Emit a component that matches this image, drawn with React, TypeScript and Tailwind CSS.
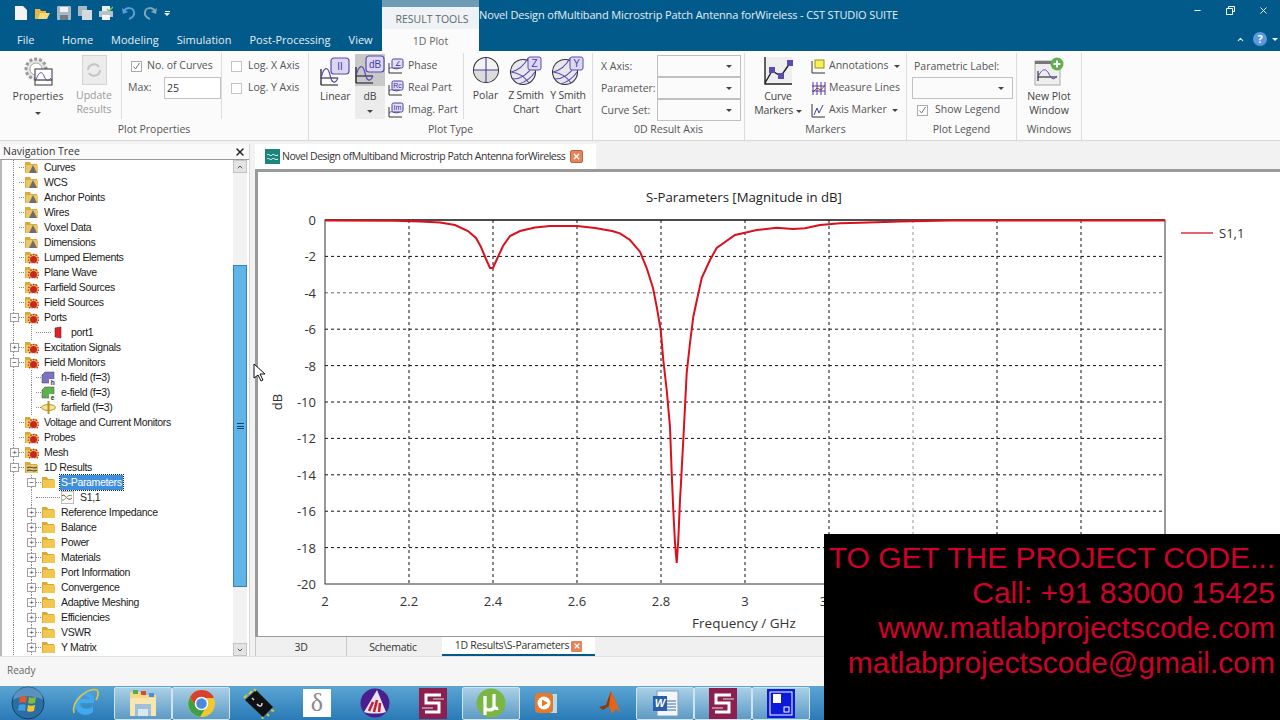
import React from 'react';
import { ChevronUp, ChevronDown, Minus, X } from 'lucide-react';

const uiFont = { fontFamily: '"Open Sans", "Noto Sans", sans-serif' };

function Caret({ className = '' }: { className?: string }) {
	return <span className={`inline-block w-0 h-0 border-x-[3px] border-x-transparent border-t-[3px] border-t-[#444] ${className}`} />;
}

function WaveIcon({ badge, dim = false }: { badge?: string; dim?: boolean }) {
	return (
		<svg width="30" height="30" viewBox="0 0 30 30">
			<path d="M1 12v16M1 21h17M1 28h17" stroke={dim ? '#999' : '#111'} strokeWidth="1.2" fill="none" />
			<path d="M1 21c3-12 7-12 9-3s5 9 8 3" stroke="#5b4bb0" strokeWidth="1.2" fill="none" />
			{badge && (
				<>
					<rect x="11" y="1" width="18" height="16" rx="3" fill="#dcd8f3" stroke="#5b4bb0" strokeWidth="1.2" />
					<text x="20" y="13" textAnchor="middle" fontSize="10" fill="#4a3ca6" fontFamily="Liberation Sans">{badge}</text>
				</>
			)}
		</svg>
	);
}

function SmithIcon({ letter }: { letter: string }) {
	return (
		<svg width="32" height="30" viewBox="0 0 32 30">
			<circle cx="13" cy="16" r="12.5" fill="#e8e8ec" stroke="#333" strokeWidth="1.1" />
			<path d="M1 16c8-2 14-8 17-14M3 23c8 0 15-5 20-13M9 28c6-2 12-6 16-12M1 16c8 1 14 5 18 11" stroke="#5b4bb0" strokeWidth="1.1" fill="none" />
			<rect x="18" y="1" width="13" height="13" rx="2" fill="#dcd8f3" stroke="#5b4bb0" />
			<text x="24.5" y="11" textAnchor="middle" fontSize="10" fill="#4a3ca6" fontFamily="Liberation Sans">{letter}</text>
		</svg>
	);
}

function SmallBadge({ letter }: { letter: string }) {
	return (
		<svg width="16" height="16" viewBox="0 0 16 16">
			<path d="M1 5v10h13" stroke="#333" fill="none" />
			<path d="M1 11c3-4 6 3 12-2" stroke="#5b4bb0" fill="none" />
			<rect x="4" y="1" width="11" height="9" rx="1.5" fill="#e2dff5" stroke="#4a3ca6" />
			<text x="9.5" y="8" textAnchor="middle" fontSize="7" fill="#3b2e96" fontFamily="Liberation Sans">{letter}</text>
		</svg>
	);
}

function Check({ checked = false, dim = false }: { checked?: boolean; dim?: boolean }) {
	return (
		<span className={`w-[11px] h-[11px] border flex items-center justify-center shrink-0 bg-white ${dim ? 'border-[#c4c4c4]' : 'border-[#ababab]'}`}>
			{checked && (
				<svg width="9" height="9" viewBox="0 0 9 9"><path d="M1.5 4.5l2 2.5 4-6" stroke="#777" fill="none" /></svg>
			)}
		</span>
	);
}

function Group({ label, width, children }: { label: string; width: string; children: React.ReactNode }) {
	return (
		<div className={`${width} h-[87px] mt-[2px] border-r border-[#dcdcdc] flex flex-col shrink-0`}>
			<div className="flex-1 flex min-h-0">{children}</div>
			<div className="h-[19px] text-center text-[10.5px] leading-[16px] text-[#555]">{label}</div>
		</div>
	);
}

function Combo({ className = '' }: { className?: string }) {
	return (
		<div className={`h-[22px] border border-[#c0c0c0] bg-[#fbfbfb] flex items-center justify-end pr-2 ${className}`}>
			<Caret />
		</div>
	);
}

function Ribbon() {
	return (
		<div className="h-[90px] bg-[#fbfbfb] border-b border-[#d8d8d8] flex text-[10.5px] text-[#555]">
			<Group label="Plot Properties" width="w-[309px]">
				<div className="w-[76px] pt-[3px] flex flex-col items-center">
					<svg width="30" height="30" viewBox="0 0 30 30">
						<circle cx="13" cy="13" r="10" fill="#e4e4e4" stroke="#999" strokeWidth="3" strokeDasharray="3 2" />
						<circle cx="13" cy="13" r="6" fill="#fff" stroke="#aaa" />
						<rect x="12" y="13" width="17" height="16" fill="#fff" stroke="#333" />
						<path d="M12 24h17" stroke="#111" />
						<path d="M13 24c3-9 6-9 8-4s4 6 7 2" stroke="#5b4bb0" fill="none" />
					</svg>
					<div className="mt-[3px] text-[#444] leading-[14px]">Properties</div>
					<Caret className="mt-[9px]" />
				</div>
				<div className="w-[45px] pr-[9px] flex flex-col items-center pt-[2px]">
					<div className="w-[25px] h-[30px] bg-[#ececec] border border-[#d4d4d4] flex items-center justify-center">
						<svg width="18" height="18" viewBox="0 0 18 18"><path d="M3 9a6 6 0 0 1 11-3M15 9a6 6 0 0 1-11 3" stroke="#c4c4c4" strokeWidth="2" fill="none" /></svg>
					</div>
					<div className="mt-[3px] text-[#9a9a9a] leading-[14px] text-center">Update<br />Results</div>
				</div>
				<div className="w-[100px] h-[66px] border-l border-[#dcdcdc] pl-[6px] pt-[5px] flex flex-col">
					<div className="flex items-center gap-[5px] h-[16px] pl-[3px]">
						<Check checked />
						<span>No. of Curves</span>
					</div>
					<div className="flex items-center mt-[3px] h-[22px]">
						<span className="w-[36px]">Max:</span>
						<div className="w-[57px] h-[22px] border border-[#c4c4c4] bg-white pl-[2px] leading-[20px] text-[#333]">25</div>
					</div>
				</div>
				<div className="flex-1 h-[66px] border-l border-[#dcdcdc] pl-[9px] pt-[5px] flex flex-col gap-[6px]">
					<div className="flex items-center gap-[6px] h-[16px]"><Check dim /><span>Log. X Axis</span></div>
					<div className="flex items-center gap-[6px] h-[16px]"><Check dim /><span>Log. Y Axis</span></div>
				</div>
			</Group>
			<Group label="Plot Type" width="w-[284px]">
				<div className="w-[46px] pl-[11px] pt-[4px] flex flex-col items-start">
					<WaveIcon badge="II" />
					<div className="mt-[2px] text-[#444] leading-[14px]">Linear</div>
				</div>
				<div className="w-[30px] h-[65px] mt-[1px] bg-[#ececec] flex flex-col items-center">
					<div className="w-full h-[32px] bg-[#c8c8c8] flex items-center justify-center"><WaveIcon badge="dB" /></div>
					<div className="mt-[3px] text-[#444] leading-[14px]">dB</div>
					<Caret className="mt-[7px]" />
				</div>
				<div className="pl-[3px] pt-[2px] flex flex-col text-[#555]">
					<div className="flex items-center gap-[4px] h-[22px]"><SmallBadge letter="∠" /><span>Phase</span></div>
					<div className="flex items-center gap-[4px] h-[22px]"><SmallBadge letter="Rc" /><span>Real Part</span></div>
					<div className="flex items-center gap-[4px] h-[22px]"><SmallBadge letter="Im" /><span>Imag. Part</span></div>
				</div>
				<div className="ml-auto border-l border-[#dcdcdc] w-[129px] h-[66px] flex">
					<div className="w-[43px] pt-[3px] flex flex-col items-center">
						<svg width="28" height="28" viewBox="0 0 28 28">
							<circle cx="14" cy="14" r="12.5" fill="#f3f3f3" stroke="#333" strokeWidth="1.1" />
							<path d="M2 14h24a12 12 0 0 1-24 0z" fill="#dcdcdc" />
							<path d="M14 1.5v25M1.5 14h25" stroke="#4a3ca6" strokeWidth="1.1" />
						</svg>
						<div className="mt-[4px] text-[#444] leading-[14px]">Polar</div>
					</div>
					<div className="w-[38px] pt-[3px] flex flex-col items-center text-center">
						<SmithIcon letter="Z" />
						<div className="mt-[2px] text-[#444] leading-[14px] whitespace-nowrap tracking-[-0.2px]">Z Smith<br />Chart</div>
					</div>
					<div className="w-[46px] pt-[3px] flex flex-col items-center text-center">
						<SmithIcon letter="Y" />
						<div className="mt-[2px] text-[#444] leading-[14px] whitespace-nowrap tracking-[-0.2px]">Y Smith<br />Chart</div>
					</div>
				</div>
			</Group>
			<Group label="0D Result Axis" width="w-[152px]">
				<div className="pl-[8px] pt-[2px] flex gap-[1px]">
					<div className="w-[55px] flex flex-col">
						<div className="h-[22px] leading-[22px]">X Axis:</div>
						<div className="h-[22px] leading-[22px]">Parameter:</div>
						<div className="h-[22px] leading-[22px]">Curve Set:</div>
					</div>
					<div className="w-[84px] flex flex-col">
						<Combo />
						<Combo />
						<Combo />
					</div>
				</div>
			</Group>
			<Group label="Markers" width="w-[162px]">
				<div className="w-[66px] pt-[3px] flex flex-col items-center">
					<svg width="29" height="29" viewBox="0 0 29 29">
						<rect x="1" y="1" width="27" height="27" fill="#eeeeee" />
						<path d="M1 1v27h27" stroke="#222" strokeWidth="1.4" fill="none" />
						<path d="M1 27l7-12 9 5 9-13" stroke="#222" strokeWidth="1.4" fill="none" />
						<rect x="5" y="11" width="6" height="6" fill="#5b4bb0" />
						<rect x="14" y="17" width="6" height="6" fill="#5b4bb0" />
						<rect x="23" y="4" width="6" height="6" fill="#5b4bb0" />
					</svg>
					<div className="mt-[4px] text-[#444] leading-[14px] text-center whitespace-nowrap tracking-[-0.2px]">Curve<br />Markers <Caret className="align-middle" /></div>
				</div>
				<div className="flex flex-col pt-[2px] text-[#555]">
					<div className="flex items-center gap-[3px] h-[22px] whitespace-nowrap">
						<svg width="15" height="15" viewBox="0 0 15 15"><path d="M1 2v12h13" stroke="#333" fill="none" /><rect x="4" y="1" width="9" height="8" fill="#f6ee5a" stroke="#9a8f20" /></svg>
						<span>Annotations</span><Caret className="ml-[2px]" />
					</div>
					<div className="flex items-center gap-[3px] h-[22px] whitespace-nowrap">
						<svg width="15" height="15" viewBox="0 0 15 15"><path d="M2 1v13M6 1v13M10 1v13M14 1v13M1 5h13M1 10h13" stroke="#4a3ca6" fill="none" /><path d="M2 11l4-4 4 2 4-5" stroke="#a33" fill="none" /></svg>
						<span>Measure Lines</span>
					</div>
					<div className="flex items-center gap-[3px] h-[22px] whitespace-nowrap">
						<svg width="15" height="15" viewBox="0 0 15 15"><path d="M1 1v13h13" stroke="#333" fill="none" /><path d="M3 12l3-7 2 5 4-8" stroke="#4a3ca6" fill="none" /></svg>
						<span>Axis Marker</span><Caret className="ml-[2px]" />
					</div>
				</div>
			</Group>
			<Group label="Plot Legend" width="w-[110px]">
				<div className="pl-[5px] pt-[2px] flex flex-col w-full">
					<div className="h-[22px] leading-[22px] pl-[2px]">Parametric Label:</div>
					<Combo className="w-[101px]" />
					<div className="flex items-center gap-[7px] h-[22px] pl-[5px]"><Check checked /><span>Show Legend</span></div>
				</div>
			</Group>
			<Group label="Windows" width="w-[65px]">
				<div className="w-full flex flex-col items-center pt-[4px] text-center text-[#444] leading-[14px]">
					<svg width="30" height="29" viewBox="0 0 30 29">
						<rect x="1" y="4" width="25" height="24" fill="#eeeeee" stroke="#aaa" />
						<rect x="1" y="4" width="25" height="3" fill="#777" />
						<path d="M4 14v10M4 20h19" stroke="#111" fill="none" />
						<path d="M4 20c4-9 8-9 11-3s5 6 8 2" stroke="#5b4bb0" fill="none" />
						<circle cx="23" cy="7" r="6.5" fill="#5fb04e" />
						<path d="M23 3.5v7M19.5 7h7" stroke="#fff" strokeWidth="2" />
					</svg>
					<div className="mt-[3px]">New Plot<br />Window</div>
				</div>
			</Group>
		</div>
	);
}

function TitleBar() {
	const tabs = ['Home', 'Modeling', 'Simulation', 'Post-Processing', 'View'];
	return (
		<div className="h-[51px] bg-[#015a8a] flex text-[#e6eef4]">
			<div className="w-[382px] shrink-0 flex flex-col">
				<div className="h-[26px] flex items-center pl-[14px] gap-[7px]">
					<svg width="14" height="16" viewBox="0 0 14 16"><path d="M1 1h8l4 4v10H1z" fill="#f4f4f4" /></svg>
					<svg width="15" height="14" viewBox="0 0 15 14"><path d="M0 3h5l1 2h5v8H0z" fill="#e6b64a" /><path d="M3 13l2-6h10l-3 6z" fill="#f6d97c" /></svg>
					<svg width="14" height="14" viewBox="0 0 14 14"><rect width="14" height="14" rx="1" fill="#a9b7c2" /><rect x="3" y="1" width="8" height="5" fill="#eef2f5" /><rect x="3" y="9" width="8" height="5" fill="#6b7d8a" /></svg>
					<svg width="14" height="14" viewBox="0 0 14 14"><rect width="9" height="10" fill="#a9b7c2" /><rect x="4" y="4" width="10" height="10" fill="#d3dbe1" /></svg>
					<svg width="14" height="14" viewBox="0 0 14 14"><rect x="3" y="0" width="8" height="5" fill="#eee" /><rect y="5" width="14" height="6" fill="#b8c2c9" /><rect x="3" y="9" width="8" height="5" fill="#f6f6f6" /><path d="M8 3l2 2 4-4" stroke="#6fd060" strokeWidth="1.5" fill="none" /></svg>
					<svg width="14" height="14" viewBox="0 0 14 14" className="ml-[2px]"><path d="M2 5c3-4 9-4 10 1s-3 6-5 7" stroke="#5f9be0" strokeWidth="2" fill="none" /><path d="M0 2l1 6 5-2z" fill="#5f9be0" /></svg>
					<svg width="14" height="14" viewBox="0 0 14 14"><path d="M12 5C9 1 3 1 2 6s3 6 5 7" stroke="#7aa6b8" strokeWidth="2" fill="none" /><path d="M14 2l-1 6-5-2z" fill="#7aa6b8" /></svg>
					<span className="flex flex-col items-center gap-[1px]">
						<span className="w-[5px] h-[1px] bg-white" />
						<Caret className="border-t-white" />
					</span>
				</div>
				<div className="h-[25px] pt-[4px] flex items-center text-[11px]">
					<span className="w-[52px] pl-[17px]">File</span>
					{tabs.map((t, i) => (
						<span key={t} className={i === 0 ? 'ml-[10px]' : 'ml-[18px]'}>{t}</span>
					))}
				</div>
			</div>
			<div className="w-[97px] shrink-0 flex flex-col">
				<div className="h-[7px] bg-[#6f9cb5]" />
				<div className="h-[22px] bg-[#edf3f6] text-[10.5px] text-[#666] text-center leading-[24px] pl-[3px]">RESULT TOOLS</div>
				<div className="h-[22px] bg-[#fbfbfb] text-[10.5px] text-[#666] text-center leading-[24px]">1D Plot</div>
			</div>
			<div className="flex-1 pt-[7px] text-[11px] leading-[16px] whitespace-nowrap tracking-[-0.13px]">Novel Design ofMultiband Microstrip Patch Antenna forWireless - CST STUDIO SUITE</div>
			<div className="w-[99px] shrink-0 flex flex-col items-end">
				<div className="h-[20px] flex items-center pt-[1px]">
					<span className="w-[33px] flex justify-center"><Minus size={9} strokeWidth={3} className="text-white" /></span>
					<span className="w-[33px] flex justify-center"><svg width="9" height="9" viewBox="0 0 9 9"><path d="M2.5 2.5V.5h6v5h-2M.5 2.5h6v6h-6z" stroke="#fff" fill="none" /></svg></span>
					<span className="w-[33px] flex justify-center"><X size={11} strokeWidth={2} className="text-white" /></span>
				</div>
				<div className="h-[22px] mt-[8px] flex items-center pr-[2px]">
					<ChevronUp size={9} strokeWidth={3} className="text-[#d8e4ec]" />
					<span className="ml-[8px] w-[14px] h-[14px] rounded-full bg-[#5d97e0] text-white text-[11px] font-bold leading-[14px] text-center">?</span>
					<Caret className="ml-[5px] border-t-white" />
				</div>
			</div>
		</div>
	);
}

type TreeIcon = 'gray' | 'red' | 'port' | 'h' | 'e' | 'far' | 'res' | 'folder' | 'sig';

type TreeRow = { label: string; depth: number; icon: TreeIcon; box?: '+' | '-'; conn?: number; selected?: boolean };

const rows: TreeRow[] = [
	{ label: 'Curves', depth: 0, icon: 'gray' },
	{ label: 'WCS', depth: 0, icon: 'gray' },
	{ label: 'Anchor Points', depth: 0, icon: 'gray' },
	{ label: 'Wires', depth: 0, icon: 'gray' },
	{ label: 'Voxel Data', depth: 0, icon: 'gray' },
	{ label: 'Dimensions', depth: 0, icon: 'gray' },
	{ label: 'Lumped Elements', depth: 0, icon: 'red' },
	{ label: 'Plane Wave', depth: 0, icon: 'red' },
	{ label: 'Farfield Sources', depth: 0, icon: 'red' },
	{ label: 'Field Sources', depth: 0, icon: 'red' },
	{ label: 'Ports', depth: 0, icon: 'red', box: '-' },
	{ label: 'port1', depth: 1, icon: 'port', conn: 15 },
	{ label: 'Excitation Signals', depth: 0, icon: 'red', box: '+' },
	{ label: 'Field Monitors', depth: 0, icon: 'red', box: '-' },
	{ label: 'h-field (f=3)', depth: 1, icon: 'h' },
	{ label: 'e-field (f=3)', depth: 1, icon: 'e' },
	{ label: 'farfield (f=3)', depth: 1, icon: 'far' },
	{ label: 'Voltage and Current Monitors', depth: 0, icon: 'red' },
	{ label: 'Probes', depth: 0, icon: 'red' },
	{ label: 'Mesh', depth: 0, icon: 'red', box: '+' },
	{ label: '1D Results', depth: 0, icon: 'res', box: '-' },
	{ label: 'S-Parameters', depth: 1, icon: 'folder', box: '-', selected: true },
	{ label: 'S1,1', depth: 1, icon: 'sig', conn: 24 },
	{ label: 'Reference Impedance', depth: 1, icon: 'folder', box: '+' },
	{ label: 'Balance', depth: 1, icon: 'folder', box: '+' },
	{ label: 'Power', depth: 1, icon: 'folder', box: '+' },
	{ label: 'Materials', depth: 1, icon: 'folder', box: '+' },
	{ label: 'Port Information', depth: 1, icon: 'folder', box: '+' },
	{ label: 'Convergence', depth: 1, icon: 'folder', box: '+' },
	{ label: 'Adaptive Meshing', depth: 1, icon: 'folder', box: '+' },
	{ label: 'Efficiencies', depth: 1, icon: 'folder', box: '+' },
	{ label: 'VSWR', depth: 1, icon: 'folder', box: '+' },
	{ label: 'Y Matrix', depth: 1, icon: 'folder', box: '+' },
];

function NodeIcon({ icon }: { icon: TreeIcon }) {
	if (icon === 'port') {
		return <svg width="13" height="13" viewBox="0 0 13 13"><path d="M3 2l6-1v11l-6-1z" fill="#d8262c" stroke="#8a1518" strokeWidth=".6" /></svg>;
	}
	if (icon === 'h' || icon === 'e') {
		const c = icon === 'h' ? '#7a72c4' : '#5fb04e';
		return (
			<svg width="15" height="14" viewBox="0 0 15 14">
				<path d="M1 4l3-3h9v8l-3 3H1z" fill={c} stroke="#444" strokeWidth=".5" />
				<rect x="8" y="8" width="7" height="6" fill="#f4f4f4" />
				<text x="11.5" y="13.5" textAnchor="middle" fontSize="6.5" fontWeight="700" fill="#333" fontFamily="Liberation Sans">{icon}</text>
			</svg>
		);
	}
	if (icon === 'far') {
		return <svg width="15" height="13" viewBox="0 0 15 13"><ellipse cx="7.5" cy="6.5" rx="7" ry="3" fill="#f4e39a" stroke="#b8921e" /><path d="M7.5 0v13" stroke="#b8921e" strokeWidth="2" /></svg>;
	}
	if (icon === 'sig') {
		return <svg width="13" height="13" viewBox="0 0 13 13"><rect x=".5" y=".5" width="12" height="12" fill="#fff" stroke="#bbb" /><path d="M1 5c3-4 5 7 10 2" stroke="#c22" fill="none" /><path d="M1 9c4 1 5-7 10-4" stroke="#3a3" fill="none" /></svg>;
	}
	return (
		<svg width="14" height="13" viewBox="0 0 14 13">
			<path d="M0 3V1h5l1 2h6v9H0z" fill="#d9a93a" />
			<path d="M1 12V4h12v8z" fill={icon === 'folder' ? '#f1c74f' : '#edc66a'} />
			{icon === 'gray' && <path d="M8 4l4 8H4z" fill="#6d6d6d" />}
			{icon === 'red' && <><circle cx="8.5" cy="8.5" r="3.5" fill="#c6281c" /><circle cx="8.5" cy="8.5" r="5" fill="none" stroke="#c6281c" strokeWidth="1.4" strokeDasharray="1.4 1.4" /></>}
			{icon === 'res' && <path d="M2 7c3-3 6 2 10-1M2 10c3-3 6 2 10-1" stroke="#555" strokeWidth="1.2" fill="none" />}
		</svg>
	);
}

function Tree() {
	return (
		<div className="flex-1 min-w-0 overflow-hidden text-[10.5px] leading-[15px] text-[#1a1a1a] tracking-[-0.35px]" style={{ fontFamily: '"Liberation Sans", sans-serif' }}>
			{rows.map((r) => (
				<div key={r.label} className={`relative h-[15px] flex items-center whitespace-nowrap ${r.depth === 0 ? 'pl-[8px]' : 'pl-[25px]'}`}>
					<span className="absolute left-[11px] top-0 h-full border-l border-dotted border-[#888]" />
					{r.depth === 1 && <span className="absolute left-[29px] top-0 h-full border-l border-dotted border-[#888]" />}
					<span className={`relative w-[9px] h-[9px] shrink-0 bg-white border border-[#a0a0a0] text-[8px] leading-[7px] text-center text-[#333] tracking-normal ${r.box ? '' : 'invisible'}`}>{r.box === '-' ? '−' : '+'}</span>
					<span className="h-0 border-t border-dotted border-[#888] shrink-0" style={{ width: r.conn ?? 5 }} />
					<span className="shrink-0 w-[15px] flex justify-center"><NodeIcon icon={r.icon} /></span>
					<span className={`ml-[4px] px-[1px] ${r.selected ? 'bg-[#3f8fdc] text-white outline-1 outline-dotted outline-[#123]' : ''}`}>{r.label}</span>
				</div>
			))}
		</div>
	);
}

function Scrollbar() {
	return (
		<div className="w-[14px] mr-[2px] shrink-0 bg-[#f2f2f2] flex flex-col">
			<div className="h-[13px] bg-[#e4e4e4] border border-[#c4c4c4] flex items-center justify-center"><ChevronUp size={8} strokeWidth={3} className="text-[#555]" /></div>
			<div className="h-[92px]" />
			<div className="h-[322px] bg-[#5fb4e8] border border-[#3c7fb0] flex items-center justify-center">
				<span className="w-[7px] h-[6px] border-y border-[#16476b] flex items-center"><span className="w-full h-[1px] bg-[#16476b]" /></span>
			</div>
			<div className="flex-1" />
			<div className="h-[13px] bg-[#e4e4e4] border border-[#c4c4c4] flex items-center justify-center"><ChevronDown size={8} strokeWidth={3} className="text-[#555]" /></div>
		</div>
	);
}

const yTicks = [0, -2, -4, -6, -8, -10, -12, -14, -16, -18, -20];
const xTicks = ['2', '2.2', '2.4', '2.6', '2.8', '3', '3.2', '3.4', '3.6', '3.8', '4'];
const curve = '325,220.5 395,220.8 420,221.4 440,222.6 455,225 468,231 476,238 481,247 486,259 490,268 493,268 497,259 503,246 510,236 520,231 535,227.5 550,226 577,226 595,228 612,231 620,233.3 630,240 640,251.7 646.7,268 653,288 656.7,306.7 660.7,330 663.3,360 666.7,390 670,426.7 671.7,473 673.3,510 675,543 676.7,563 678.3,540 680,500 681.7,470 684,426.7 686.7,373 690,343 693.3,316.7 701.7,278 710,260 716.7,248 735,235 745,232.7 756.7,230 776.7,227.7 793,229 805,228.3 820,225 840,223.3 860,222.7 900,221.5 950,220.5 1000,220.5 1165,220.5';

function Chart() {
	return (
		<svg width="1022" height="466" viewBox="258 172 1022 466" className="block" fontFamily="'Open Sans', sans-serif">
			<text x="744" y="202" textAnchor="middle" fontSize="13.2" fill="#222">S-Parameters [Magnitude in dB]</text>
			{yTicks.map((v, i) => {
				const y = 220 + i * 36.4;
				return (
					<g key={v}>
						{i > 0 && i < 10 && <line x1="325" x2="1165" y1={y} y2={y} stroke={v === -4 ? '#666' : '#111'} strokeDasharray="3 3" />}
						<text x="316" y={y + 5} textAnchor="end" fontSize="13" fill="#333">{v}</text>
					</g>
				);
			})}
			{xTicks.map((v, i) => {
				const x = 325 + i * 84;
				return (
					<g key={v}>
						{i > 0 && i < 10 && <line x1={x} x2={x} y1="220" y2="584" stroke={v === '3.4' ? '#999' : '#111'} strokeDasharray="3 3" />}
						{i < 7 && <text x={x} y="606" textAnchor="middle" fontSize="13" fill="#333">{v}</text>}
					</g>
				);
			})}
			<rect x="325" y="220" width="840" height="364" fill="none" stroke="#333" />
			<line x1="325" x2="1165" y1="220" y2="220" stroke="#000" />
			<polyline points={curve} fill="none" stroke="#dc0f1c" strokeWidth="2" />
			<text x="744" y="628" textAnchor="middle" fontSize="13.5" fill="#333">Frequency / GHz</text>
			<text x="282" y="402" textAnchor="middle" fontSize="13" fill="#333" transform="rotate(-90 282 402)">dB</text>
			<line x1="1181" x2="1213" y1="233" y2="233" stroke="#d4101c" strokeWidth="1.3" />
			<text x="1219" y="238" fontSize="13" fill="#333">S1,1</text>
		</svg>
	);
}

function TaskSlot({ active = false, children }: { active?: boolean; children: React.ReactNode }) {
	return (
		<div className={`w-[58px] h-[33px] shrink-0 flex items-center justify-center rounded-[2px] ${active ? 'bg-[linear-gradient(#a9cfe6,#5c9ac5)] border border-[#cfe3f0]' : ''}`}>
			{children}
		</div>
	);
}

function Cst() {
	return (
		<svg width="28" height="31" viewBox="0 0 28 31">
			<rect width="28" height="31" fill="#8c1f4d" />
			<path d="M22 7H7v8h13v9H6" stroke="#fff" strokeWidth="3" fill="none" />
			<path d="M14 11h11M14 20h-11" stroke="#d8e8d8" strokeWidth="1" />
		</svg>
	);
}

function Taskbar() {
	return (
		<div className="h-[34px] bg-[linear-gradient(#5aa5d3,#2a7ab6)] flex items-center">
			<div className="w-[56px] flex items-center justify-center shrink-0">
				<svg width="34" height="34" viewBox="0 0 34 34">
					<circle cx="17" cy="17" r="16" fill="#2b6ea3" stroke="#12405f" />
					<path d="M2 14a15 13 0 0 1 30 0c-8-5-22-5-30 0z" fill="#7fb2d4" opacity="0.55" />
					<path d="M9 11c2-1 4-1 7 0l-1 6c-3-1-5-1-7 0z" fill="#e4552c" />
					<path d="M18 11c2 1 4 1 7 0l-1 6c-3 1-5 1-7 0z" fill="#80bb3c" />
					<path d="M8 19c2-1 4-1 7 0l-1 6c-3-1-5-1-7 0z" fill="#3f9fe0" />
					<path d="M17 19c2 1 4 1 7 0l-1 6c-3 1-5 1-7 0z" fill="#f5c52e" />
				</svg>
			</div>
			<TaskSlot>
				<svg width="30" height="32" viewBox="0 0 30 32">
					<path d="M6 22C1 9 17-1 24 10v6H10c1 7 9 7 13 3v6c-6 5-14 3-17-3zM10 12h9c-1-5-8-5-9 0z" fill="#41a9ef" fillRule="evenodd" />
					<path d="M4 26C1 14 18 0 27 3c2 2 1 7-1 10" stroke="#e8c440" strokeWidth="1.6" fill="none" />
				</svg>
			</TaskSlot>
			<TaskSlot active>
				<svg width="30" height="28" viewBox="0 0 30 28">
					<path d="M2 3h10l2 3h14v21H2z" fill="#f3d98a" />
					<path d="M2 9h26v18H2z" fill="#f7e6ae" />
					<rect x="7" y="15" width="16" height="12" fill="#9fc0d8" />
					<rect x="10" y="20" width="10" height="7" fill="#d9e7f1" />
					<rect x="5" y="1" width="5" height="4" fill="#5aa84a" />
					<rect x="13" y="2" width="5" height="4" fill="#d84a3a" />
					<rect x="21" y="4" width="5" height="4" fill="#4a8fd8" />
				</svg>
			</TaskSlot>
			<TaskSlot active>
				<svg width="29" height="29" viewBox="0 0 29 29">
					<circle cx="14.5" cy="14.5" r="13.5" fill="#f0c932" />
					<path d="M14.5 1A13.5 13.5 0 0 0 3 8l6 10 5.5-9H27A13.5 13.5 0 0 0 14.5 1z" fill="#d8402f" />
					<path d="M3 8a13.5 13.5 0 0 0 10 20l6-10-10 0z" fill="#3ea14a" />
					<circle cx="14.5" cy="14.5" r="6" fill="#4a89dc" stroke="#fff" strokeWidth="1.5" />
				</svg>
			</TaskSlot>
			<TaskSlot>
				<svg width="32" height="32" viewBox="0 0 32 32">
					<path d="M2 13L13 3l17 17-10 10z" fill="#111" />
					<path d="M1 11l3-3M6 7l3-3M11 2l2 2M28 23l3 1M24 27l2 2M19 30l1 2" stroke="#d8c830" strokeWidth="2" />
					<path d="M9 11l2 2M14 17c2 3 5 3 5-1" stroke="#ddd" strokeWidth="1.4" fill="none" />
				</svg>
			</TaskSlot>
			<TaskSlot>
				<div className="w-[28px] h-[28px] bg-white flex items-center justify-center text-[26px] leading-[26px] text-[#8a8a8a]" style={{ fontFamily: '"Liberation Serif", serif' }}>δ</div>
			</TaskSlot>
			<TaskSlot>
				<svg width="30" height="30" viewBox="0 0 30 30">
					<circle cx="15" cy="15" r="14.5" fill="#4b1e8f" />
					<path d="M17 2L4 24c5 2 17 2 22 0z" fill="#e7e2f0" />
					<path d="M13 14l-4 9M17 12l-3 12M20 15l-1 9" stroke="#c8202c" strokeWidth="2.5" />
				</svg>
			</TaskSlot>
			<TaskSlot><Cst /></TaskSlot>
			<TaskSlot active>
				<svg width="30" height="30" viewBox="0 0 30 30">
					<circle cx="15" cy="15" r="14.5" fill="#7ab644" />
					<path d="M9 8v11c0 4 8 4 9 0V6M9 18v9M18 17c0 3 2 4 4 3" stroke="#fff" strokeWidth="3.2" fill="none" />
				</svg>
			</TaskSlot>
			<TaskSlot>
				<svg width="24" height="22" viewBox="0 0 24 22" className="-ml-[6px]">
					<rect x="5" y="2" width="18" height="19" fill="#bcd9ec" />
					<rect x="1" y="1" width="18" height="20" rx="4" fill="#e67a2a" />
					<circle cx="10" cy="11" r="6.5" fill="#fff" />
					<path d="M8 7.5l6 3.5-6 3.5z" fill="#e67a2a" />
				</svg>
			</TaskSlot>
			<TaskSlot>
				<svg width="24" height="26" viewBox="0 0 24 26" className="ml-[6px]">
					<path d="M13 1c3 4 6 15 10 21l-5-3-4 5-3-8-3-1z" fill="#e0661c" />
					<path d="M13 1L8 15 1 17l4 3 6-4z" fill="#8a3a12" />
				</svg>
			</TaskSlot>
			<TaskSlot active>
				<svg width="27" height="27" viewBox="0 0 27 27">
					<rect x="5" y="1" width="21" height="25" fill="#f2f5f9" stroke="#7a9cc0" />
					<path d="M14 14h10M14 17h10M14 20h10M14 11h10" stroke="#3c6aa6" />
					<rect x="1" y="6" width="14" height="15" fill="#2a5ea8" />
					<text x="8" y="17" textAnchor="middle" fontSize="11" fontWeight="700" fontStyle="italic" fill="#fff" fontFamily="Liberation Sans">W</text>
				</svg>
			</TaskSlot>
			<TaskSlot active><Cst /></TaskSlot>
			<TaskSlot active>
				<svg width="28" height="29" viewBox="0 0 28 29">
					<rect width="28" height="29" fill="#0a1ad8" />
					<rect x="3" y="3" width="22" height="23" fill="none" stroke="#fff" />
					<rect x="6" y="5" width="8" height="9" fill="#fff" />
					<rect x="17" y="18" width="5" height="5" fill="none" stroke="#fff" />
				</svg>
			</TaskSlot>
		</div>
	);
}

export default function App() {
	return (
		<div className="w-[1280px] h-[720px] relative overflow-hidden bg-[#f0f0f0] flex flex-col" style={uiFont}>
			<TitleBar />
			<Ribbon />
			<div className="h-[515px] flex bg-[#f2f2f2] pt-[3px]">
				<div className="w-[250px] shrink-0 flex flex-col bg-white border-r border-[#d8d8d8]">
					<div className="h-[16px] flex items-center justify-between pl-[3px] pr-[3px] border-b border-[#9a9a9a] text-[10.5px] text-[#333] bg-[#fafafa]">
						<span>Navigation Tree</span>
						<X size={12} strokeWidth={3} className="text-[#222]" />
					</div>
					<div className="flex-1 min-h-0 flex border-l-2 border-[#b8b8b8]">
						<Tree />
						<Scrollbar />
					</div>
				</div>
				<div className="flex-1 min-w-0 flex flex-col pl-[5px]">
					<div className="h-[25px] flex">
						<div className="h-[25px] w-[341px] bg-white flex items-center pl-[10px] text-[10.5px] text-[#333] gap-[2px] whitespace-nowrap">
							<svg width="15" height="15" viewBox="0 0 15 15">
								<rect width="15" height="15" fill="#19857d" />
								<path d="M2 6c2-2 3 2 5 0s3 2 6 0M2 10c2-2 3 2 5 0s3 2 6 0" stroke="#fff" fill="none" />
							</svg>
							<span className="tracking-[-0.46px]">Novel Design ofMultiband Microstrip Patch Antenna forWireless</span>
							<span className="ml-[3px] w-[13px] h-[13px] bg-[#e3855a] border border-[#c2623a] rounded-[2px] flex items-center justify-center"><X size={9} strokeWidth={3.5} className="text-white" /></span>
						</div>
					</div>
					<div className="border-l-[3px] border-t-[3px] border-b border-[#9a9a9a] bg-white flex-1 min-h-0 overflow-hidden">
						<Chart />
					</div>
					<div className="h-[19px] bg-[#f0f0f0] flex items-stretch text-[10.5px] text-[#333] tracking-[-0.3px]">
						<div className="w-[91px] text-center leading-[21px] border-l border-[#c8c8c8]">3D</div>
						<div className="w-[93px] text-center leading-[21px] border-l border-[#c8c8c8]">Schematic</div>
						<div className="w-[153px] bg-white border-b-2 border-[#015a8a] flex items-center justify-center gap-[2px] ml-[3px] pt-[1px]">
							<span>1D Results\S-Parameters</span>
							<span className="w-[11px] h-[11px] bg-[#e3855a] rounded-[1px] flex items-center justify-center"><X size={8} strokeWidth={3.5} className="text-white" /></span>
						</div>
					</div>
				</div>
			</div>
			<div className="h-[30px] bg-[#f6f6f6] border-t border-[#e2e2e2] pl-[7px] text-[10px] leading-[26px] text-[#666]">Ready</div>
			<Taskbar />
			<div className="absolute left-[824px] top-[534px] w-[456px] h-[186px] bg-black text-right pt-[6px] pr-[5px] text-[30px] leading-[35px] text-[#d0002a] whitespace-nowrap" style={{ fontFamily: '"Liberation Sans", sans-serif' }}>
				<div>TO GET THE PROJECT CODE...</div>
				<div>Call: +91 83000 15425</div>
				<div>www.matlabprojectscode.com</div>
				<div>matlabprojectscode@gmail.com</div>
			</div>
			<svg width="16" height="20" viewBox="0 0 16 20" className="absolute left-[252px] top-[363px]">
				<path d="M2 1v14l4-3 3 6 2-1-3-6h5z" fill="#fff" stroke="#111" />
			</svg>
		</div>
	);
}
